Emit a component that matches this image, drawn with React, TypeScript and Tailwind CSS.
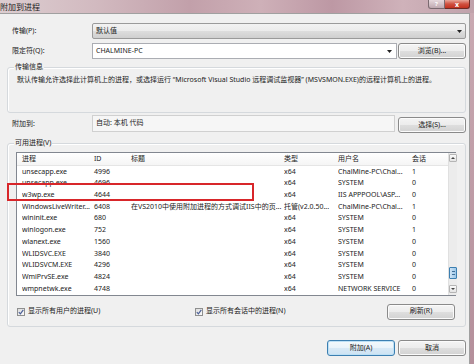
import React from 'react';

const font = { fontFamily: '"Noto Sans", "Noto Sans CJK SC", sans-serif' };

interface Proc {
  name: string;
  id: string;
  title: string;
  type: string;
  user: string;
  session: string;
}

const PROCS: Proc[] = [
  { name: 'unsecapp.exe', id: '4996', title: '', type: 'x64', user: 'ChalMine-PC\\Chal...', session: '1' },
  { name: 'unsecapp.exe', id: '4696', title: '', type: 'x64', user: 'SYSTEM', session: '0' },
  { name: 'w3wp.exe', id: '4644', title: '', type: 'x64', user: 'IIS APPPOOL\\ASP...', session: '0' },
  { name: 'WindowsLiveWriter...', id: '6408', title: '在VS2010中使用附加进程的方式调试IIS中的页...', type: '托管(v2.0.50...', user: 'ChalMine-PC\\Chal...', session: '1' },
  { name: 'wininit.exe', id: '680', title: '', type: 'x64', user: 'SYSTEM', session: '0' },
  { name: 'winlogon.exe', id: '752', title: '', type: 'x64', user: 'SYSTEM', session: '1' },
  { name: 'wlanext.exe', id: '1560', title: '', type: 'x64', user: 'SYSTEM', session: '0' },
  { name: 'WLIDSVC.EXE', id: '3840', title: '', type: 'x64', user: 'SYSTEM', session: '0' },
  { name: 'WLIDSVCM.EXE', id: '4296', title: '', type: 'x64', user: 'SYSTEM', session: '0' },
  { name: 'WmiPrvSE.exe', id: '4824', title: '', type: 'x64', user: 'SYSTEM', session: '0' },
  { name: 'wmpnetwk.exe', id: '4748', title: '', type: 'x64', user: 'NETWORK SERVICE', session: '0' },
];

const cols = 'grid grid-cols-[72px_37px_153px_54px_74px_36px] pl-[5px]';

function Button({ label, className = '', primary = false }: { label: string; className?: string; primary?: boolean }) {
  return (
    <div
      className={
        'h-[16px] flex items-center justify-center rounded-[3px] border text-[7px] text-[#222] ' +
        (primary
          ? 'border-[#3c7fb1] bg-[linear-gradient(180deg,#f4f9fc_0%,#e9f3fa_50%,#d8e9f6_51%,#cde3f3_100%)] shadow-[inset_0_0_0_1px_#bde0f5] '
          : 'border-[#8a8a8a] bg-[linear-gradient(180deg,#f4f4f4_0%,#ececec_50%,#dedede_51%,#d2d2d2_100%)] shadow-[inset_0_0_0_1px_#fbfbfb] ') +
        className
      }
    >
      {label}
    </div>
  );
}

function Arrow() {
  return (
    <svg width="5" height="3" viewBox="0 0 5 3">
      <path d="M0 0h5L2.5 3z" fill="#222" />
    </svg>
  );
}

function Check({ label }: { label: string }) {
  return (
    <div className="flex items-center gap-[3px] text-[7px] text-[#222]">
      <div className="w-[8px] h-[8px] border border-[#8e8f8f] bg-[linear-gradient(135deg,#dcdcdc,#fbfbfb)] flex items-center justify-center">
        <svg width="6" height="6" viewBox="0 0 6 6">
          <path d="M0.8 3.2 L2.4 4.8 L5.3 0.9" stroke="#4a5f97" strokeWidth="1.2" fill="none" />
        </svg>
      </div>
      <span>{label}</span>
    </div>
  );
}

export default function App() {
  return (
    <div className="w-[474px] h-[364px] overflow-hidden relative flex flex-col bg-[#f0f0f0]" style={font}>
      {/* title bar */}
      <div className="h-[13px] shrink-0 flex items-center bg-[linear-gradient(90deg,#dccdd0_0%,#d2bac0_20%,#c2a0aa_40%,#ceb0b8_55%,#bd98a4_70%,#cfb2ba_85%,#c0a2ab_100%)]">
        <span className="ml-[0px] text-[8px] text-[#1c1c1c]">附加到进程</span>
        <div className="ml-auto flex h-full items-start">
          <div className="w-[17px] h-[9px] rounded-bl-[3px] border border-t-0 border-[#7a6a70] bg-[linear-gradient(180deg,#e6d8dc,#bfa9b0)] flex items-center justify-center text-[6px] leading-none text-white font-bold">?</div>
          <div className="w-[25px] h-[9px] rounded-br-[3px] border border-t-0 border-l-0 border-[#6e2a24] bg-[linear-gradient(180deg,#e8a598_0%,#d0503f_50%,#c2311f_100%)] flex items-center justify-center text-[7px] leading-none text-white font-bold">x</div>
          <div className="w-[4px]" />
        </div>
      </div>

      <div className="flex flex-1 min-h-0">
        <div className="w-[470px] border-r border-t border-[#a0a0a0] flex flex-col pl-[7px] pr-[3px] text-[7px] text-[#222]">
          {/* transport */}
          <div className="mt-[9px] h-[16px] flex items-center">
            <span className="w-[85px] pl-[5px]">传输(P):</span>
            <div className="flex-1 h-full flex items-center justify-between pl-[3px] pr-[3px] rounded-[2px] border border-[#9a9a9a] bg-[linear-gradient(180deg,#f2f2f2_0%,#ebebeb_50%,#dddddd_51%,#cfcfcf_100%)]">
              <span>默认值</span>
              <Arrow />
            </div>
          </div>

          {/* qualifier */}
          <div className="mt-[4px] h-[16px] flex items-center">
            <span className="w-[85px] pl-[5px]">限定符(Q):</span>
            <div className="w-[305px] h-full flex items-center justify-between pl-[3px] pr-[4px] border border-[#abadb3] bg-white">
              <span>CHALMINE-PC</span>
              <Arrow />
            </div>
            <Button label="浏览(B)..." className="ml-[1px] w-[68px]" />
          </div>

          {/* info group */}
          <div className="mt-[8px] h-[46px] relative border border-[#d5d9dd] rounded-[3px] shadow-[inset_1px_1px_0_#fff]">
            <span className="absolute left-[6px] top-[-6px] px-[1px] bg-[#f0f0f0]">传输信息</span>
            <div className="pl-[9px] pt-[7px]">
              默认传输允许选择此计算机上的进程，或选择运行 “Microsoft Visual Studio 远程调试监视器” (MSVSMON.EXE)的远程计算机上的进程。
            </div>
          </div>

          {/* attach to */}
          <div className="mt-[2px] h-[18px] flex items-start">
            <span className="w-[85px] pl-[5px] mt-[4px]">附加到:</span>
            <div className="w-[303px] h-[17px] flex items-center pl-[3px] border border-[#d0d0d0] bg-[#f6f6f6]">
              自动: 本机 代码
            </div>
            <Button label="选择(S)..." className="ml-[3px] mt-[2px] w-[68px]" />
          </div>

          {/* process group */}
          <div className="mt-[10px] h-[184px] relative border border-[#d5d9dd] rounded-[3px] shadow-[inset_1px_1px_0_#fff] flex flex-col">
            <span className="absolute left-[6px] top-[-6px] px-[1px] bg-[#f0f0f0]">可用进程(V)</span>

            <div className="mt-[8px] ml-[8px] w-[440px] h-[144px] border border-[#828790] bg-white flex">
              <div className="flex-1 flex flex-col">
                <div className={cols + ' h-[13px] items-center border-b border-[#e5e5e5] bg-[linear-gradient(180deg,#ffffff,#f5f5f5)]'}>
                  <span>进程</span>
                  <span>ID</span>
                  <span>标题</span>
                  <span>类型</span>
                  <span>用户名</span>
                  <span>会话</span>
                </div>
                {PROCS.map((p, i) => (
                  <div key={i} className={cols + ' h-[11.8px] items-center whitespace-nowrap'}>
                    <span className="overflow-hidden">{p.name}</span>
                    <span>{p.id}</span>
                    <span className="overflow-hidden">{p.title}</span>
                    <span className="overflow-hidden">{p.type}</span>
                    <span className="overflow-hidden">{p.user}</span>
                    <span>{p.session}</span>
                  </div>
                ))}
              </div>
              {/* scrollbar */}
              <div className="w-[9px] bg-[#ececec] border-l border-[#e0e0e0] flex flex-col items-center">
                <div className="w-[8px] h-[8px] mt-[1px] border border-[#b5b5b5] rounded-[1px] bg-[linear-gradient(180deg,#fafafa,#e4e4e4)] flex items-center justify-center">
                  <svg width="4" height="2" viewBox="0 0 4 2"><path d="M0 2h4L2 0z" fill="#444" /></svg>
                </div>
                <div className="flex-1" />
                <div className="w-[8px] h-[12px] border border-[#3c7fb1] rounded-[1px] bg-[linear-gradient(90deg,#cfe4f5,#9cc6e8)] flex items-center justify-center">
                  <div className="w-[3px] h-[4px] border-y border-[#3f6f99]" />
                </div>
                <div className="h-[6px]" />
                <div className="w-[8px] h-[8px] mb-[2px] border border-[#b5b5b5] rounded-[1px] bg-[linear-gradient(180deg,#fafafa,#e4e4e4)] flex items-center justify-center">
                  <svg width="4" height="2" viewBox="0 0 4 2"><path d="M0 0h4L2 2z" fill="#444" /></svg>
                </div>
              </div>
            </div>

            <div className="mt-[8px] h-[15px] flex items-center">
              <div className="ml-[9px] w-[178px]"><Check label="显示所有用户的进程(U)" /></div>
              <Check label="显示所有会话中的进程(N)" />
              <Button label="刷新(R)" className="ml-auto mr-[10px] w-[68px]" />
            </div>
          </div>

          {/* bottom buttons */}
          <div className="mt-[13px] flex justify-end gap-[3px]">
            <Button label="附加(A)" primary className="w-[68px]" />
            <Button label="取消" className="w-[68px]" />
          </div>
        </div>
        <div className="flex-1 bg-[linear-gradient(180deg,#c9a9b2,#b48f9b)]" />
      </div>

      {/* red highlight drawn over the list */}
      <div className="absolute left-[7px] top-[183px] w-[247px] h-[18px] border-[2.5px] border-[#d8262a]" />
    </div>
  );
}
